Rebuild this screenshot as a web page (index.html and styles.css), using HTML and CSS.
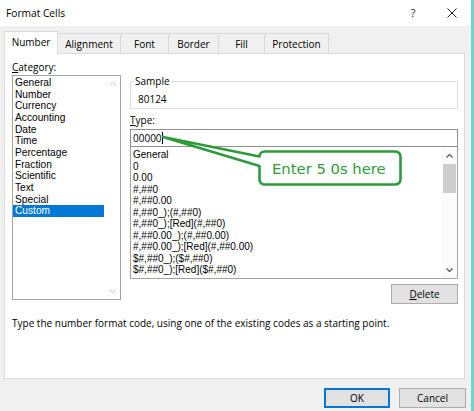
FILE: index.html
```html
<!DOCTYPE html>
<html>
<head>
<meta charset="utf-8">
<title>Format Cells</title>
<link rel="stylesheet" href="styles.css">
</head>
<body>
<div class="window">
  <div class="titlebar">
    <span class="title">Format Cells</span>
    <span class="help">?</span>
    <span class="close"><svg width="10" height="10" viewBox="0 0 10 10"><path d="M0.5 0.5 L9.5 9.5 M9.5 0.5 L0.5 9.5" stroke="#222" stroke-width="1" fill="none"/></svg></span>
  </div>
  <div class="tabs">
    <div class="tab active w-number">Number</div>
    <div class="tab w-align">Alignment</div>
    <div class="tab w-font">Font</div>
    <div class="tab w-border">Border</div>
    <div class="tab w-fill">Fill</div>
    <div class="tab w-prot">Protection</div>
  </div>
  <div class="panel">
    <div class="cols">
      <div class="left">
        <span class="lbl"><u>C</u>ategory:</span>
        <div class="listbox cat">
          <ul class="items">
            <li>General</li>
            <li>Number</li>
            <li>Currency</li>
            <li>Accounting</li>
            <li>Date</li>
            <li>Time</li>
            <li>Percentage</li>
            <li>Fraction</li>
            <li>Scientific</li>
            <li>Text</li>
            <li>Special</li>
            <li class="sel">Custom</li>
          </ul>
          <div class="vscroll disabled">
            <span class="arrow"><svg width="7" height="4" viewBox="0 0 7 4"><path d="M0.5 3.5 L3.5 0.5 L6.5 3.5" fill="none" stroke="#c4c4c4" stroke-width="1"/></svg></span>
            <span class="arrow"><svg width="7" height="4" viewBox="0 0 7 4"><path d="M0.5 0.5 L3.5 3.5 L6.5 0.5" fill="none" stroke="#c4c4c4" stroke-width="1"/></svg></span>
          </div>
        </div>
      </div>
      <div class="right">
        <fieldset class="sample">
          <legend>Sample</legend>
          <div class="sample-val">80124</div>
        </fieldset>
        <span class="lbl type-lbl"><u>T</u>ype:</span>
        <div class="typebox">00000<span class="caret"></span></div>
        <div class="listbox fmt">
          <ul class="items">
            <li>General</li>
            <li>0</li>
            <li>0.00</li>
            <li>#,##0</li>
            <li>#,##0.00</li>
            <li>#,##0_);(#,##0)</li>
            <li>#,##0_);[Red](#,##0)</li>
            <li>#,##0.00_);(#,##0.00)</li>
            <li>#,##0.00_);[Red](#,##0.00)</li>
            <li>$#,##0_);($#,##0)</li>
            <li>$#,##0_);[Red]($#,##0)</li>
          </ul>
          <div class="vscroll">
            <span class="arrow up"><svg width="7" height="4" viewBox="0 0 7 4"><path d="M0.5 3.5 L3.5 0.5 L6.5 3.5" fill="none" stroke="#555" stroke-width="1.2"/></svg></span>
            <span class="thumb"></span>
            <span class="spacer"></span>
            <span class="arrow down"><svg width="7" height="4" viewBox="0 0 7 4"><path d="M0.5 0.5 L3.5 3.5 L6.5 0.5" fill="none" stroke="#555" stroke-width="1.2"/></svg></span>
          </div>
        </div>
        <div class="delete-row"><button class="btn delete"><u>D</u>elete</button></div>
      </div>
    </div>
    <p class="hint">Type the number format code, using one of the existing codes as a starting point.</p>
  </div>
  <div class="footer">
    <button class="btn ok">OK</button>
    <button class="btn cancel">Cancel</button>
  </div>
  <svg class="callout" width="260" height="64" viewBox="0 0 260 64">
    <path d="M114.5 23.5 H245.5 A5 5 0 0 1 250.5 28.5 V51.5 A5 5 0 0 1 245.5 56.5 H114.5 A5 5 0 0 1 109.5 51.5 V38 L13 9 L109.5 28.5 A5 5 0 0 1 114.5 23.5 Z" fill="#fff" stroke="#2e9b3a" stroke-width="2.6" stroke-linejoin="round"/>
    <text x="122" y="46" class="callout-text">Enter 5 0s here</text>
  </svg>
</div>
</body>
</html>
```

FILE: styles.css
```css
* { box-sizing: border-box; }
html, body { margin: 0; padding: 0; }
body {
  width: 474px;
  height: 411px;
  overflow: hidden;
  font-family: "Open Sans", "Noto Sans", sans-serif;
  font-size: 10px;
  color: #000;
  background: #f0f0f0;
}
.window {
  position: relative;
  width: 474px;
  height: 411px;
  border-right: 3px solid #6dd3cf;
  background: #f0f0f0;
  display: flex;
  flex-direction: column;
}
.titlebar {
  height: 26px;
  flex: none;
  background: #fff;
  display: flex;
  align-items: center;
  padding-left: 6px;
}
.title { flex: 1; font-size: 10.2px; line-height: 14px; }
.help {
  width: 30px;
  text-align: center;
  font-size: 11px;
  line-height: 14px;
  color: #222;
}
.close {
  width: 43px;
  padding-left: 19px;
  display: flex;
  align-items: center;
  height: 14px;
}
.tabs {
  display: flex;
  align-items: flex-end;
  height: 23px;
  margin: 5px 0 -1px 4px;
  flex: none;
}
.tab {
  height: 21px;
  border: 1px solid #d9d9d9;
  border-bottom: none;
  background: #f0f0f0;
  display: flex;
  align-items: center;
  justify-content: center;
  margin-left: -1px;
  line-height: 12px;
  padding-bottom: 1px;
}
.tab.active {
  margin-left: 0;
  height: 23px;
  background: #fff;
  position: relative;
  z-index: 2;
  padding-bottom: 3px;
}
.w-number { width: 54px; }
.w-align { width: 64px; }
.w-font { width: 49px; }
.w-border { width: 51px; }
.w-fill { width: 47px; }
.w-prot { width: 65px; }

.panel {
  flex: none;
  width: 461px;
  height: 326px;
  margin-left: 4px;
  border: 1px solid #d9d9d9;
  background: #fff;
  padding: 7px 0 0 7px;
}
.cols {
  display: flex;
  gap: 9px;
  align-items: flex-start;
}
.left { width: 109px; }
.right { width: 328px; }
.lbl {
  display: block;
  height: 14px;
  line-height: 12px;
}
.listbox {
  display: flex;
  border: 1px solid #a3a3a3;
  background: #fff;
}
.items {
  flex: 1;
  list-style: none;
  margin: 0;
  padding: 0;
  white-space: nowrap;
  overflow: hidden;
  font-family: "Liberation Sans", Arial, sans-serif;
}
.cat { height: 225px; }
.cat .items { padding-top: 1px; line-height: 11.65px; font-size: 10.2px; }
.cat li { padding-left: 2px; }
.cat li.sel { background: #0078d7; color: #fff; }
.vscroll {
  width: 16px;
  flex: none;
  display: flex;
  flex-direction: column;
  justify-content: space-between;
}
.arrow {
  height: 16px;
  display: flex;
  align-items: center;
  justify-content: center;
}
.sample {
  margin: 14px 0 0;
  padding: 6px 0 3px 7px;
  border: 1px solid #dcdcdc;
  min-width: 0;
}
.sample legend {
  padding: 0 1px;
  margin-left: -4px;
  line-height: 12px;
}
.sample-val { line-height: 12px; }
.type-lbl {
  margin-top: 5px;
  height: 15px;
}
.typebox {
  height: 18px;
  border: 1px solid #8f8f8f;
  padding-left: 2px;
  line-height: 16px;
  background: #fff;
  position: relative;
}
.caret {
  display: inline-block;
  width: 1px;
  height: 12px;
  background: #000;
  vertical-align: -2px;
  margin-left: 0;
}
.fmt {
  height: 133px;
  margin-top: -1px;
}
.fmt .items { padding-top: 2px; line-height: 11.5px; font-size: 10px; }
.fmt li { padding-left: 2px; }
.fmt .vscroll {
  justify-content: flex-start;
  background: #fbfbfb;
}
.fmt .arrow.up { height: 17px; }
.thumb {
  display: block;
  height: 29px;
  margin: 0 1px 0 2px;
  background: #cdcdcd;
}
.spacer { flex: 1; }
.delete-row {
  display: flex;
  justify-content: flex-end;
  margin-top: 5px;
}
.btn {
  font-family: "Open Sans", "Noto Sans", sans-serif;
  font-size: 10px;
  color: #000;
  height: 20px;
  padding: 0;
  line-height: 18px;
  background: #e1e1e1;
  border: 1px solid #adadad;
  border-radius: 0;
  text-align: center;
}
.delete { width: 67px; }
.hint {
  margin: 13px 0 0;
  line-height: 12px;
}
.footer {
  flex: 1;
  display: flex;
  justify-content: flex-end;
  align-items: flex-start;
  gap: 9px;
  padding: 9px 5px 0 0;
}
.ok {
  width: 66px;
  border-color: #0078d7;
  box-shadow: inset 0 0 0 1px #0078d7;
}
.cancel { width: 67px; }
.callout {
  position: absolute;
  left: 150px;
  top: 128px;
}
.callout-text {
  font-family: "DejaVu Sans", sans-serif;
  font-size: 14.8px;
  fill: #2e9b3a;
}
```
